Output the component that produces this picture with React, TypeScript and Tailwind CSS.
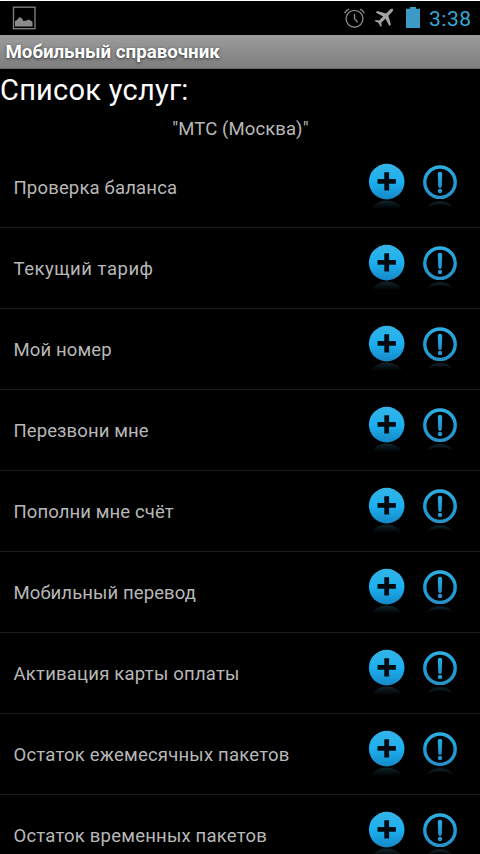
const services = [
  { name: 'Проверка баланса', spacing: 'tracking-[0.17px]' },
  { name: 'Текущий тариф', spacing: 'tracking-[0.52px]' },
  { name: 'Мой номер', spacing: 'tracking-[0.12px]' },
  { name: 'Перезвони мне', spacing: 'tracking-[0.1px]' },
  { name: 'Пополни мне счёт', spacing: 'tracking-[0.1px]' },
  { name: 'Мобильный перевод', spacing: 'tracking-[0.1px]' },
  { name: 'Активация карты оплаты', spacing: 'tracking-[0.22px]' },
  { name: 'Остаток ежемесячных пакетов', spacing: 'tracking-[0.2px]' },
  { name: 'Остаток временных пакетов', spacing: 'tracking-[0.2px]' },
];

function Gradients() {
  return (
    <svg width="0" height="0" className="absolute">
      <defs>
        <linearGradient id="disc" x1="0" y1="0" x2="0" y2="1">
          <stop offset="0" stopColor="#35b4e6" />
          <stop offset="0.5" stopColor="#1cb0f0" />
          <stop offset="1" stopColor="#1688c6" />
        </linearGradient>
        <linearGradient id="ring" gradientUnits="userSpaceOnUse" x1="0" y1="3" x2="0" y2="37">
          <stop offset="0" stopColor="#2fb0e4" />
          <stop offset="0.5" stopColor="#1e9cd8" />
          <stop offset="1" stopColor="#2a92c8" />
        </linearGradient>
        <linearGradient id="glow" gradientUnits="userSpaceOnUse" x1="0" y1="38" x2="0" y2="47">
          <stop offset="0" stopColor="#12272f" />
          <stop offset="1" stopColor="#000000" />
        </linearGradient>
      </defs>
    </svg>
  );
}

function AddIcon() {
  return (
    <svg width="40" height="48" viewBox="0 0 40 48">
      <circle cx="19.7" cy="19.6" r="17.8" fill="url(#disc)" />
      <path d="M19.7 10.2v18.4M10.5 19.4h18.4" stroke="#020a10" strokeWidth="4.8" />
      <path d="M4 47Q9 38.5 19.7 38.5T36 47Z" fill="url(#glow)" />
    </svg>
  );
}

function InfoIcon() {
  return (
    <svg width="40" height="48" viewBox="0 0 40 48">
      <circle cx="20" cy="20.2" r="15.2" fill="none" stroke="url(#ring)" strokeWidth="3.4" />
      <path d="M17.8 11.9a2.2 2.2 0 0 1 4.4 0l-.5 12.4a1.6 1.6 0 0 1-3.4 0Z" fill="url(#ring)" />
      <circle cx="20" cy="29" r="2.2" fill="url(#ring)" />
      <path d="M6 46Q11 39 20 39T34 46Q28 42.5 20 42.5T6 46Z" fill="url(#glow)" />
    </svg>
  );
}

function StatusBar() {
  return (
    <div className="flex h-[35px] shrink-0 items-start border-t border-white">
      <svg width="24" height="24" viewBox="0 0 24 24" className="ml-3 mt-[5px]">
        <rect x="1.5" y="1.2" width="21.5" height="21.5" fill="none" stroke="#7d7d7d" strokeWidth="1.4" />
        <path d="M3 20.5v-5.5l2-1 2.5-3 2.5 1.5 1.5 2.5 3-.5 2-1 2 1 2 1.2v4.8Z" fill="#8a8a8a" />
      </svg>
      <div className="ml-auto flex items-start pr-2">
        <svg width="22" height="22" viewBox="0 0 22 22" className="mt-1.5" fill="none" stroke="#858585" strokeWidth="1.4">
          <circle cx="11.5" cy="11.8" r="8.4" />
          <path d="M11.5 6.8v5l3.2 3.4M1.6 6.3a9 9 0 0 1 4.4-4.2M21.4 6.3a9 9 0 0 0-4.4-4.2" />
        </svg>
        <svg width="20" height="20" viewBox="0 0 20 20" className="ml-[9px] mt-[7px]" fill="#a2a2a2">
          <path d="M18.9 1c-.9-.7-2.3-.1-3.3.9l-3.5 3.5-8.8-2.5-1.5 1.5 7.3 4-4 4.2-3.4-.5-1 1 3.9 2 2.1 4 1-1-.5-3.4 4.2-4 4 7.3 1.5-1.5-2.5-8.8 3.4-3.5c1-1 1.6-2.3 1.1-3.2Z" />
        </svg>
        <svg width="14" height="21" viewBox="0 0 14 21" className="ml-3 mt-[6px]" fill="#3c9bc5">
          <path d="M4 0h6v1.8h4V21H0V1.8h4Z" />
        </svg>
        <span className="ml-[9px] mt-[6px] w-[43px] whitespace-nowrap text-[21px] leading-6 tracking-[0.5px] text-[#36a9d6]">3:38</span>
      </div>
    </div>
  );
}

export default function App() {
  return (
    <div className="flex h-[854px] w-[480px] flex-col overflow-hidden bg-black font-['Roboto','Noto_Sans',sans-serif]">
      <Gradients />
      <StatusBar />
      <header className="flex h-[34px] shrink-0 items-center border-b border-[#686868] bg-linear-to-b from-[#9c9c9c] to-[#7e7e7e] pl-[5.5px]">
        <h1 className="mt-px text-[18.7px] font-bold leading-6 text-white [text-shadow:0_1px_3px_#333]">Мобильный справочник</h1>
      </header>
      <h2 className="h-[43px] shrink-0 whitespace-nowrap text-[29px] leading-[42px] tracking-[0.25px] text-white">Список услуг:</h2>
      <p className="h-[35px] shrink-0 pl-px text-center text-[18.5px] leading-[34px] tracking-[0.1px] text-[#b8b8b8]">"МТС (Москва)"</p>
      <ul className="shrink-0">
        {services.map(({ name, spacing }) => (
          <li key={name} className="flex h-[81px] items-start border-b border-[#1c1c1c] pl-[13.5px] pr-5">
            <span className={`mt-[29px] whitespace-nowrap text-[18.5px] leading-6 text-[#b8b8b8] ${spacing}`}>{name}</span>
            <div className="ml-auto mt-[15px] flex gap-[13px]">
              <AddIcon />
              <InfoIcon />
            </div>
          </li>
        ))}
      </ul>
    </div>
  );
}
